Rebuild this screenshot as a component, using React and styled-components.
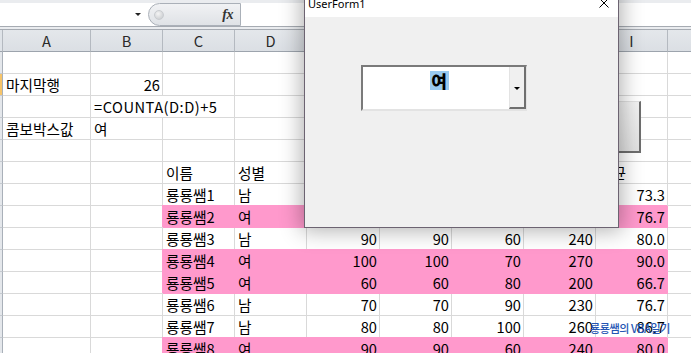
import React from "react";
import styled, { createGlobalStyle } from "styled-components";

const PINK = "#ff99cc";
const GRID = "#d9d9d9";
const W = [88, 72, 72, 72, 73, 72, 72, 72, 72, 60];
const LETTERS = ["A", "B", "C", "D", "E", "F", "G", "H", "I", ""];

const people = [
  ["룡룡쌤1", "남", 80, 70, 70, 220, "73.3"],
  ["룡룡쌤2", "여", 80, 80, 70, 230, "76.7"],
  ["룡룡쌤3", "남", 90, 90, 60, 240, "80.0"],
  ["룡룡쌤4", "여", 100, 100, 70, 270, "90.0"],
  ["룡룡쌤5", "여", 60, 60, 80, 200, "66.7"],
  ["룡룡쌤6", "남", 70, 70, 90, 230, "76.7"],
  ["룡룡쌤7", "남", 80, 80, 100, 260, "86.7"],
  ["룡룡쌤8", "여", 90, 90, 60, 240, "80.0"],
];

function buildRow(spec = {}) {
  const out = [];
  for (let i = 0; i < W.length; i++) {
    const s = spec[i] || {};
    let w = W[i];
    if (s.span) for (let k = 1; k < s.span; k++) w += W[i + k];
    out.push({ ...s, w, key: i });
    if (s.span) i += s.span - 1;
  }
  return out;
}

function personRow(p) {
  const fill = p[1] === "여";
  const spec = {};
  p.forEach((v, i) => {
    spec[i + 2] = { t: String(v), right: i > 1, fill };
  });
  return buildRow(spec);
}

const rows = [
  { cells: buildRow() },
  { active: true, cells: buildRow({ 0: { t: "마지막행" }, 1: { t: "26", right: true } }) },
  { cells: buildRow({ 1: { t: "=COUNTA(D:D)+5", span: 2 } }) },
  { cells: buildRow({ 0: { t: "콤보박스값" }, 1: { t: "여" } }) },
  { cells: buildRow() },
  {
    cells: buildRow({
      2: { t: "이름" },
      3: { t: "성별" },
      4: { t: "국어" },
      5: { t: "영어" },
      6: { t: "수학" },
      7: { t: "합계" },
      8: { t: "평균" },
    }),
  },
  ...people.map((p) => ({ cells: personRow(p) })),
];

const GlobalStyle = createGlobalStyle`
  html, body { margin: 0; padding: 0; background: #fff; }
  body { overflow: hidden; }
`;

const Page = styled.div`
  position: relative;
  width: 691px;
  height: 353px;
  overflow: hidden;
  background: #fff;
  font-family: "Noto Sans CJK KR", "Noto Sans", sans-serif;
`;

/* formula bar */
const FormulaBar = styled.div`
  height: 30px;
  box-sizing: border-box;
  padding-top: 3px;
  background: #eaecef;
  border-bottom: 1px solid #a6abb2;
`;

const FormulaRow = styled.div`
  display: flex;
  height: 24px;
  box-sizing: border-box;
  background: #fff;
  border-bottom: 1px solid #a6abb2;
`;

const NameBox = styled.div`
  flex: 0 0 148px;
  display: flex;
  align-items: center;
  justify-content: flex-end;
  padding-right: 7px;
  box-sizing: border-box;
`;

const Caret = styled.span`
  width: 0;
  height: 0;
  border-left: 3px solid transparent;
  border-right: 3px solid transparent;
  border-top: 3px solid #222;
`;

const FxPill = styled.div`
  flex: 0 0 93px;
  box-sizing: border-box;
  display: flex;
  align-items: center;
  justify-content: space-between;
  padding: 0 7px 0 5px;
  border: 1px solid #aab0b8;
  border-radius: 12px 0 0 12px;
  background: linear-gradient(#f1f2f4, #dfe2e6);
`;

const Knob = styled.span`
  width: 8px;
  height: 8px;
  border-radius: 50%;
  background: radial-gradient(circle at 40% 35%, #f4f4f4, #c3c6ca);
  border: 1px solid #c9ccd0;
`;

const Fx = styled.span`
  font-family: "Liberation Serif", serif;
  font-style: italic;
  font-weight: bold;
  font-size: 14px;
  color: #333;
  letter-spacing: -0.5px;
`;

const FormulaInput = styled.div`
  flex: 1;
`;

/* grid */
const HeaderRow = styled.div`
  display: flex;
  height: 22px;
`;

const Corner = styled.div`
  flex: 0 0 3px;
  box-sizing: border-box;
  background: #dfe3e8;
  border-right: 1px solid #b4b9c0;
  border-bottom: 1px solid #9da4ad;
`;

const ColHead = styled.div`
  flex: 0 0 ${(p) => p.$w}px;
  box-sizing: border-box;
  border-right: 1px solid #b4b9c0;
  border-bottom: 1px solid #9da4ad;
  background: linear-gradient(#e4e7eb, #dbdfe4);
  text-align: center;
  font-size: 14.67px;
  line-height: 21px;
  color: #2a2a2a;
`;

const Row = styled.div`
  display: flex;
  height: 22px;
`;

const RowHead = styled.div`
  flex: 0 0 3px;
  box-sizing: border-box;
  background: ${(p) => (p.$active ? "#f6c46a" : "#e4e7eb")};
  border-right: 1px solid #a9b0b9;
  border-bottom: 1px solid #c5cad0;
`;

const Cell = styled.div`
  flex: 0 0 ${(p) => p.$w}px;
  box-sizing: border-box;
  padding: 0 2px 0 3px;
  border-right: 1px solid ${(p) => (p.$fill ? PINK : GRID)};
  border-bottom: 1px solid ${(p) => (p.$fill ? PINK : GRID)};
  background: ${(p) => (p.$fill ? PINK : "transparent")};
  box-shadow: ${(p) => (p.$fill ? `-1px -1px 0 ${PINK}` : "none")};
  text-align: ${(p) => (p.$right ? "right" : "left")};
  font-size: 14.67px;
  line-height: 21px;
  letter-spacing: ${(p) => (p.$wide ? "0.5px" : "normal")};
  white-space: nowrap;
  overflow: hidden;
  color: #000;
`;

/* shape button behind the form */
const ShapeButton = styled.div`
  position: absolute;
  left: 540px;
  top: 101px;
  width: 101px;
  height: 52px;
  box-sizing: border-box;
  border: 1px solid #e0e0e0;
  border-right: 2px solid #6e6e6e;
  border-bottom: 2px solid #6e6e6e;
  background: linear-gradient(#f2f2f2, #e1e1e1);
  z-index: 2;
`;

/* userform window */
const Form = styled.div`
  position: absolute;
  left: 304px;
  top: -14px;
  width: 315px;
  height: 242px;
  box-sizing: border-box;
  border: 1px solid #6c6371;
  background: #f0f0f0;
  box-shadow: 0 0 20px 3px rgba(0, 0, 0, 0.3);
  display: flex;
  flex-direction: column;
  z-index: 3;
`;

const TitleBar = styled.div`
  flex: 0 0 30px;
  box-sizing: border-box;
  background: #fff;
  display: flex;
  align-items: flex-start;
  justify-content: space-between;
  padding: 9px 9px 0 3px;
`;

const Title = styled.span`
  font-family: "Noto Sans", sans-serif;
  font-size: 11px;
  line-height: 16px;
  color: #000;
`;

const CloseIcon = styled.svg`
  margin-top: 2px;
`;

const FormBody = styled.div`
  flex: 1;
  padding: 48px 0 0 56px;
`;

const Combo = styled.div`
  width: 166px;
  height: 46px;
  box-sizing: border-box;
  display: flex;
  background: #fff;
  border-top: 2px solid #7a7a7a;
  border-left: 2px solid #7a7a7a;
  border-right: 1px solid #e3e3e3;
  border-bottom: 2px solid #e3e3e3;
`;

const ComboText = styled.div`
  flex: 1;
  padding: 2px 0 0 6px;
  text-align: center;
`;

const Selected = styled.span`
  display: inline-block;
  width: 19px;
  height: 19px;
  line-height: 19px;
  background: #99c9ef;
  font-size: 17px;
  font-weight: 900;
  color: #000;
  text-align: center;
`;

const DropButton = styled.div`
  flex: 0 0 17px;
  box-sizing: border-box;
  display: flex;
  align-items: center;
  justify-content: center;
  padding-top: 3px;
  background: #f0f0f0;
  border-left: 1px solid #e3e3e3;
  border-right: 2px solid #6f6f6f;
  border-bottom: 2px solid #6f6f6f;
`;

const DropArrow = styled.span`
  width: 0;
  height: 0;
  border-left: 3px solid transparent;
  border-right: 3px solid transparent;
  border-top: 3px solid #000;
`;

const Watermark = styled.div`
  position: absolute;
  left: 590px;
  top: 320px;
  font-size: 11px;
  font-weight: 500;
  color: #2455b3;
  letter-spacing: -0.4px;
  z-index: 4;
`;

export default function App() {
  return (
    <Page>
      <GlobalStyle />
      <FormulaBar>
        <FormulaRow>
          <NameBox>
            <Caret />
          </NameBox>
          <FxPill>
            <Knob />
            <Fx>fx</Fx>
          </FxPill>
          <FormulaInput />
        </FormulaRow>
      </FormulaBar>

      <HeaderRow>
        <Corner />
        {LETTERS.map((l, i) => (
          <ColHead key={i} $w={W[i]}>
            {l}
          </ColHead>
        ))}
      </HeaderRow>
      {rows.map((r, ri) => (
        <Row key={ri}>
          <RowHead $active={r.active} />
          {r.cells.map((c) => (
            <Cell key={c.key} $w={c.w} $right={c.right} $fill={c.fill} $wide={!!c.span}>
              {c.t}
            </Cell>
          ))}
        </Row>
      ))}

      <ShapeButton />

      <Form>
        <TitleBar>
          <Title>UserForm1</Title>
          <CloseIcon width="10" height="10" viewBox="0 0 10 10">
            <path d="M0.5 0.5 L9.5 9.5 M9.5 0.5 L0.5 9.5" stroke="#000" strokeWidth="1" />
          </CloseIcon>
        </TitleBar>
        <FormBody>
          <Combo>
            <ComboText>
              <Selected>여</Selected>
            </ComboText>
            <DropButton>
              <DropArrow />
            </DropButton>
          </Combo>
        </FormBody>
      </Form>

      <Watermark>룡룡쌤의 VBA일기</Watermark>
    </Page>
  );
}
